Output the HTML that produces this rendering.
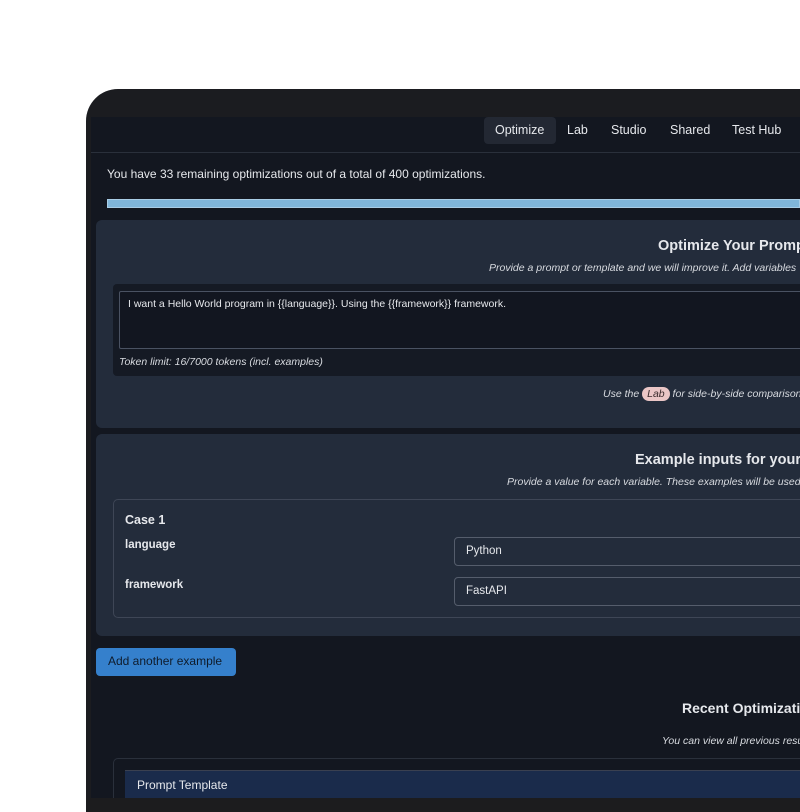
<!DOCTYPE html>
<html><head><meta charset="utf-8"><style>
*{margin:0;padding:0;box-sizing:border-box}
html,body{width:800px;height:812px;overflow:hidden}
body{background:#fff;position:relative;font-family:"Liberation Sans",sans-serif;color:#e6e8ec}
.a{position:absolute;white-space:nowrap}
#frame{position:absolute;left:86px;top:89px;width:714px;height:723px;background:#1b1c20;border-radius:32px 0 0 0}
#screen{position:absolute;left:91px;top:117px;width:709px;height:681px;background:#131720;overflow:hidden}
.card{position:absolute;background:#232c3b;border-radius:6px}
.it{font-style:italic;font-size:10.5px;color:#d8dbe0}
.b{font-weight:bold}
</style></head><body>
<div id="frame"></div>
<div id="screen"></div>
<div class="a" style="left:91px;top:152px;width:709px;height:1px;background:#2a303b"></div>
<div class="a" style="left:484px;top:117px;width:72px;height:27px;background:#232833;border-radius:4px"></div>
<div class="a" style="left:495px;top:122px;font-size:12.5px;line-height:16px">Optimize</div>
<div class="a" style="left:567px;top:122px;font-size:12.5px;line-height:16px">Lab</div>
<div class="a" style="left:611px;top:122px;font-size:12.5px;line-height:16px">Studio</div>
<div class="a" style="left:670px;top:122px;font-size:12.5px;line-height:16px">Shared</div>
<div class="a" style="left:732px;top:122px;font-size:12.5px;line-height:16px">Test Hub</div>
<div class="a" style="left:107px;top:166px;font-size:12px;line-height:16px">You have 33 remaining optimizations out of a total of 400 optimizations.</div>
<div class="a" style="left:107px;top:199px;width:693px;height:9px;background:#80b6da;border:1px solid #a9cde6"></div>

<div class="card" style="left:96px;top:220px;width:720px;height:208px"></div>
<div class="a b" style="left:658px;top:237px;font-size:14.5px;line-height:18px">Optimize Your Prompt</div>
<div class="a it" style="left:489px;top:262px;line-height:13px">Provide a prompt or template and we will improve it. Add variables</div>
<div class="a" style="left:113px;top:284px;width:700px;height:92px;background:#151a24;border-radius:4px"></div>
<div class="a" style="left:119px;top:291px;width:700px;height:58px;border:1px solid #4a5262;border-radius:2px;background:#121620"></div>
<div class="a" style="left:128px;top:298px;font-size:10.5px;line-height:13px">I want a Hello World program in {{language}}. Using the {{framework}} framework.</div>
<div class="a it" style="left:119px;top:356px;line-height:13px">Token limit: 16/7000 tokens (incl. examples)</div>
<div class="a it" style="left:603px;top:387px;line-height:13px">Use the <span style="display:inline-block;background:#eac6c6;color:#3a2a2c;border-radius:8px;padding:0 5px;line-height:14px">Lab</span> for side-by-side comparison</div>

<div class="card" style="left:96px;top:434px;width:720px;height:202px"></div>
<div class="a b" style="left:635px;top:451px;font-size:14.5px;line-height:18px">Example inputs for your</div>
<div class="a it" style="left:507px;top:476px;line-height:13px">Provide a value for each variable. These examples will be used</div>
<div class="a" style="left:113px;top:499px;width:700px;height:119px;border:1px solid #3e4656;border-radius:5px"></div>
<div class="a b" style="left:125px;top:513px;font-size:12.5px;line-height:15px">Case 1</div>
<div class="a b" style="left:125px;top:538px;font-size:11.5px;line-height:14px">language</div>
<div class="a b" style="left:125px;top:578px;font-size:11.5px;line-height:14px">framework</div>
<div class="a" style="left:454px;top:537px;width:360px;height:29px;border:1px solid #555d6c;border-radius:4px"></div>
<div class="a" style="left:466px;top:544px;font-size:11.5px;line-height:14px">Python</div>
<div class="a" style="left:454px;top:577px;width:360px;height:29px;border:1px solid #555d6c;border-radius:4px"></div>
<div class="a" style="left:466px;top:584px;font-size:11.5px;line-height:14px">FastAPI</div>

<div class="a" style="left:96px;top:648px;width:140px;height:28px;background:#3580cc;border-radius:4px"></div>
<div class="a" style="left:108px;top:654px;font-size:12px;line-height:15px;color:#0f1b2b">Add another example</div>

<div class="a b" style="left:682px;top:700px;font-size:14px;line-height:17px">Recent Optimizations</div>
<div class="a it" style="left:662px;top:735px;line-height:13px">You can view all previous results</div>
<div class="a" style="left:113px;top:758px;width:700px;height:50px;border:1px solid #2a303b;border-radius:5px"></div>
<div class="a" style="left:125px;top:770px;width:690px;height:28px;background:#1a2b4b;border-top:1px solid #3a4050"></div>
<div class="a" style="left:137px;top:778px;font-size:12px;line-height:15px">Prompt Template</div>
<div class="a" style="left:86px;top:798px;width:714px;height:14px;background:#1c1c1e"></div>
</body></html>
